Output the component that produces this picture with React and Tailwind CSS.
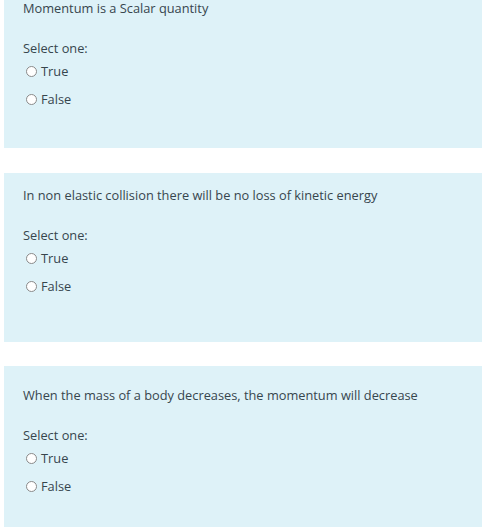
import React from "react";

const questions = [
  { text: "Momentum is a Scalar quantity", box: "pt-[12px] pb-[39px] mb-[25px]" },
  { text: "In non elastic collision there will be no loss of kinetic energy", box: "pt-[12px] pb-[46px] mb-[24px]" },
  { text: "When the mass of a body decreases, the momentum will decrease", box: "pt-[19px] pb-[45px]" },
];

const Radio = ({ label, className }) => (
  <label className={`flex items-center leading-[20px] ${className}`}>
    <span className="ml-[3px] mr-[4px] inline-block h-[11px] w-[11px] rounded-full border border-[#8a8a8a] bg-white" />
    {label}
  </label>
);

export default function App() {
  return (
    <div
      className="mt-[-14px] flex flex-col bg-white text-[12.8px] text-[#37464e]"
      style={{ fontFamily: '"Open Sans", "Noto Sans", sans-serif' }}
    >
      {questions.map((q, i) => (
        <div key={i} className={`ml-[4px] bg-[#def2f8] pl-[19px] ${q.box}`}>
          <p className="leading-[20px]">{q.text}</p>
          <p className="mt-[20px] leading-[20px]">Select one:</p>
          <Radio label="True" className="mt-[3px]" />
          <Radio label="False" className="mt-[8px]" />
        </div>
      ))}
    </div>
  );
}
